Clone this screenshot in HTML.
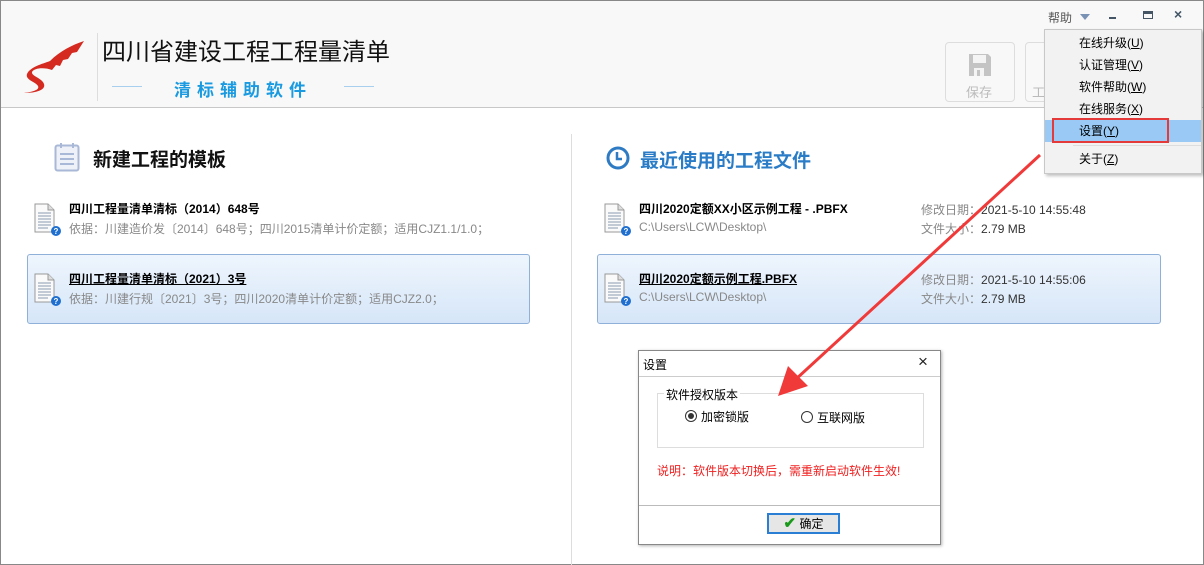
<!DOCTYPE html>
<html><head><meta charset="utf-8"><style>
*{margin:0;padding:0;box-sizing:border-box}
body{width:1204px;height:565px;overflow:hidden;background:#fff;font-family:"Liberation Sans","Noto Sans CJK SC",sans-serif;font-size:12px;color:#333;position:relative}
.abs{position:absolute}
.win{position:absolute;left:0;top:0;width:1204px;height:565px;border:1px solid #888}
.hdr{position:absolute;left:1px;top:1px;width:1202px;height:107px;background:#f8f8f8;border-bottom:1px solid #c8c8c8}
.item{position:absolute;border:1px solid #8fb0d8;border-radius:3px;background:linear-gradient(#eef5fd,#d6e6f8)}
.t1{font-weight:bold;font-size:12px;color:#000}
.t2{font-size:12px;color:#888}
.menu div{height:22px;line-height:22px;padding-left:34px;font-size:12px;color:#000}
</style></head><body>
<div class="win"></div>
<div class="hdr"></div>
<!-- logo -->
<svg class="abs" style="left:20px;top:30px" width="70" height="65" viewBox="0 0 70 65">
<path d="M64 11 C52 15 40 21 30 31 C22 34 10 37 7 44 C5 50 16 52 18 56 C20 60 12 62 4 63 C16 63 26 60 24 54 C22 48 11 46 12 42 C14 38 24 37 32 40 L36 35 L40 36 L43 30 L48 29 L52 23 L57 22 Z" fill="#d42a20"/>
</svg>
<div class="abs" style="left:97px;top:33px;width:1px;height:68px;background:#ddd"></div>
<div class="abs" style="left:102px;top:32px;font-size:24px;color:#111">四川省建设工程工程量清单</div>
<div class="abs" style="left:112px;top:86px;width:30px;height:1px;background:#a8d0ee"></div>
<div class="abs" style="left:344px;top:86px;width:30px;height:1px;background:#a8d0ee"></div>
<div class="abs" style="left:174px;top:76px;font-size:17px;font-weight:bold;color:#1a9ae0;letter-spacing:6px">清标辅助软件</div>
<!-- buttons -->
<div class="abs" style="left:945px;top:42px;width:70px;height:60px;border:1px solid #ddd;border-radius:4px"></div>
<svg class="abs" style="left:968px;top:53px" width="24" height="24" viewBox="0 0 24 24"><path d="M1 1H20L23 4V23H1Z" fill="#c4c4c4"/><rect x="5" y="2" width="13" height="8" fill="#f4f4f4"/><rect x="6" y="15" width="10" height="8" fill="#f4f4f4"/><rect x="9" y="17" width="3" height="6" fill="#c4c4c4"/></svg>
<div class="abs" style="left:966px;top:82px;font-size:13px;color:#bbb">保存</div>
<div class="abs" style="left:1025px;top:42px;width:30px;height:60px;border:1px solid #ddd;border-radius:4px"></div>
<div class="abs" style="left:1032px;top:82px;font-size:13px;color:#bbb">工</div>
<!-- title bar controls -->
<div class="abs" style="left:1048px;top:9px;font-size:12px;color:#555">帮助</div>
<div class="abs" style="left:1080px;top:14px;width:0;height:0;border-left:5px solid transparent;border-right:5px solid transparent;border-top:6px solid #7a93b5"></div>
<div class="abs" style="left:1109px;top:17px;width:7px;height:2px;background:#456"></div>
<div class="abs" style="left:1143px;top:11px;width:10px;height:8px;border:1px solid #456;border-top-width:3px"></div>
<div class="abs" style="left:1174px;top:6px;font-size:14px;color:#456;font-weight:bold">×</div>
<!-- menu -->
<div class="abs menu" style="left:1044px;top:29px;width:158px;height:145px;background:#f2f2f2;border:1px solid #c8c8c8;box-shadow:2px 2px 3px rgba(0,0,0,.25);padding-top:2px">
<div>在线升级(<u>U</u>)</div><div>认证管理(<u>V</u>)</div><div>软件帮助(<u>W</u>)</div><div>在线服务(<u>X</u>)</div>
<div style="background:#99c9f4">设置(<u>Y</u>)</div>
<div style="height:7px;padding:0;margin:3px 0 0 28px;border-top:1px solid #ddd"></div>
<div style="margin-top:-4px">关于(<u>Z</u>)</div>
</div>
<div class="abs" style="left:1052px;top:118px;width:117px;height:25px;border:2px solid #e43a3a"></div>
<!-- divider -->
<div class="abs" style="left:571px;top:134px;width:1px;height:431px;background:#ddd"></div>
<!-- left heading -->
<svg class="abs" style="left:54px;top:142px" width="26" height="30" viewBox="0 0 26 30"><rect x="1.5" y="3.5" width="23" height="25" rx="2" fill="#eef1f8" stroke="#a9b8d6" stroke-width="2"/><rect x="6" y="1" width="2" height="5" fill="#a9b8d6"/><rect x="18" y="1" width="2" height="5" fill="#a9b8d6"/><rect x="6" y="11" width="14" height="2" fill="#a9b8d6"/><rect x="6" y="16" width="14" height="2" fill="#a9b8d6"/><rect x="6" y="21" width="14" height="2" fill="#a9b8d6"/></svg>
<div class="abs" style="left:93px;top:145px;font-size:19px;font-weight:bold;color:#111">新建工程的模板</div>
<!-- right heading -->
<svg class="abs" style="left:606px;top:146px" width="24" height="24" viewBox="0 0 24 24"><circle cx="12" cy="12" r="10" fill="none" stroke="#2e7bc4" stroke-width="3"/><path d="M11 6V13H16" fill="none" stroke="#2e7bc4" stroke-width="2.5"/></svg>
<div class="abs" style="left:640px;top:146px;font-size:19px;font-weight:bold;color:#2a7cc7">最近使用的工程文件</div>
<!-- items -->
<div class="item" style="left:27px;top:254px;width:503px;height:70px"></div>
<div class="item" style="left:597px;top:254px;width:564px;height:70px"></div>
<svg width="0" height="0" style="position:absolute"><defs><g id="doc"><path d="M1 1H14L20 7V29H1Z" fill="#fafafa" stroke="#999"/><path d="M14 1V7H20" fill="#ddd" stroke="#999"/><g stroke="#8a9ab0"><line x1="4" y1="10" x2="17" y2="10"/><line x1="4" y1="13" x2="17" y2="13"/><line x1="4" y1="16" x2="17" y2="16"/><line x1="4" y1="19" x2="17" y2="19"/><line x1="4" y1="22" x2="17" y2="22"/><line x1="4" y1="25" x2="14" y2="25"/></g><circle cx="22" cy="28" r="5" fill="#1e6fd0"/><text x="22" y="31" font-size="8" fill="#fff" text-anchor="middle" font-weight="bold" font-family="Liberation Sans">?</text></g></defs></svg>
<svg class="abs" style="left:34px;top:203px" width="30" height="36"><use href="#doc"/></svg>
<svg class="abs" style="left:34px;top:273px" width="30" height="36"><use href="#doc"/></svg>
<svg class="abs" style="left:604px;top:203px" width="30" height="36"><use href="#doc"/></svg>
<svg class="abs" style="left:604px;top:273px" width="30" height="36"><use href="#doc"/></svg>
<div class="abs t1" style="left:69px;top:200px">四川工程量清单清标（2014）648号</div>
<div class="abs t2" style="left:69px;top:220px">依据：川建造价发〔2014〕648号；四川2015清单计价定额；适用CJZ1.1/1.0；</div>
<div class="abs t1" style="left:69px;top:270px;text-decoration:underline">四川工程量清单清标（2021）3号</div>
<div class="abs t2" style="left:69px;top:290px">依据：川建行规〔2021〕3号；四川2020清单计价定额；适用CJZ2.0；</div>
<div class="abs t1" style="left:639px;top:200px">四川2020定额XX小区示例工程 - .PBFX</div>
<div class="abs t2" style="left:639px;top:220px">C:\Users\LCW\Desktop\</div>
<div class="abs t1" style="left:639px;top:270px;text-decoration:underline">四川2020定额示例工程.PBFX</div>
<div class="abs t2" style="left:639px;top:290px">C:\Users\LCW\Desktop\</div>
<div class="abs" style="left:921px;top:201px;font-size:12px;color:#888">修改日期：<span style="color:#333">2021-5-10 14:55:48</span></div>
<div class="abs" style="left:921px;top:220px;font-size:12px;color:#888">文件大小：<span style="color:#333">2.79 MB</span></div>
<div class="abs" style="left:921px;top:271px;font-size:12px;color:#888">修改日期：<span style="color:#333">2021-5-10 14:55:06</span></div>
<div class="abs" style="left:921px;top:290px;font-size:12px;color:#888">文件大小：<span style="color:#333">2.79 MB</span></div>
<!-- dialog -->
<div class="abs" style="left:638px;top:350px;width:303px;height:195px;background:#fff;border:1px solid #888;box-shadow:1px 1px 3px rgba(0,0,0,.3)">
<div class="abs" style="left:4px;top:5px;font-size:12px;color:#000">设置</div>
<div class="abs" style="left:279px;top:1px;font-size:17px;color:#222">×</div>
<div class="abs" style="left:0;top:25px;width:301px;height:1px;background:#ccc"></div>
<div class="abs" style="left:18px;top:42px;width:267px;height:55px;border:1px solid #ddd"></div>
<div class="abs" style="left:25px;top:35px;background:#fff;padding:0 2px;font-size:12px;color:#000">软件授权版本</div>
<div class="abs" style="left:46px;top:59px;width:12px;height:12px;border:1px solid #333;border-radius:50%"><div style="margin:2px;width:6px;height:6px;border-radius:50%;background:#333"></div></div>
<div class="abs" style="left:62px;top:57px;font-size:12px;color:#000">加密锁版</div>
<div class="abs" style="left:162px;top:60px;width:12px;height:12px;border:1px solid #333;border-radius:50%"></div>
<div class="abs" style="left:178px;top:58px;font-size:12px;color:#000">互联网版</div>
<div class="abs" style="left:18px;top:111px;font-size:12px;color:#f02020">说明：软件版本切换后，需重新启动软件生效!</div>
<div class="abs" style="left:0;top:154px;width:301px;height:1px;background:#bbb"></div>
<div class="abs" style="left:128px;top:162px;width:73px;height:21px;border:2px solid #2a7fd4;background:#e6e6e6;font-size:12px;color:#000;text-align:center;line-height:17px"><span style="color:#1a9a1a;font-weight:bold;font-size:15px">✔</span> 确定</div>
</div>
<!-- arrow -->
<svg class="abs" style="left:0;top:0" width="1204" height="565"><line x1="1040" y1="155" x2="795" y2="380" stroke="#f03a3a" stroke-width="3"/><path d="M778 396 L788 366 L808 386 Z" fill="#f03a3a"/></svg>
</body></html>
